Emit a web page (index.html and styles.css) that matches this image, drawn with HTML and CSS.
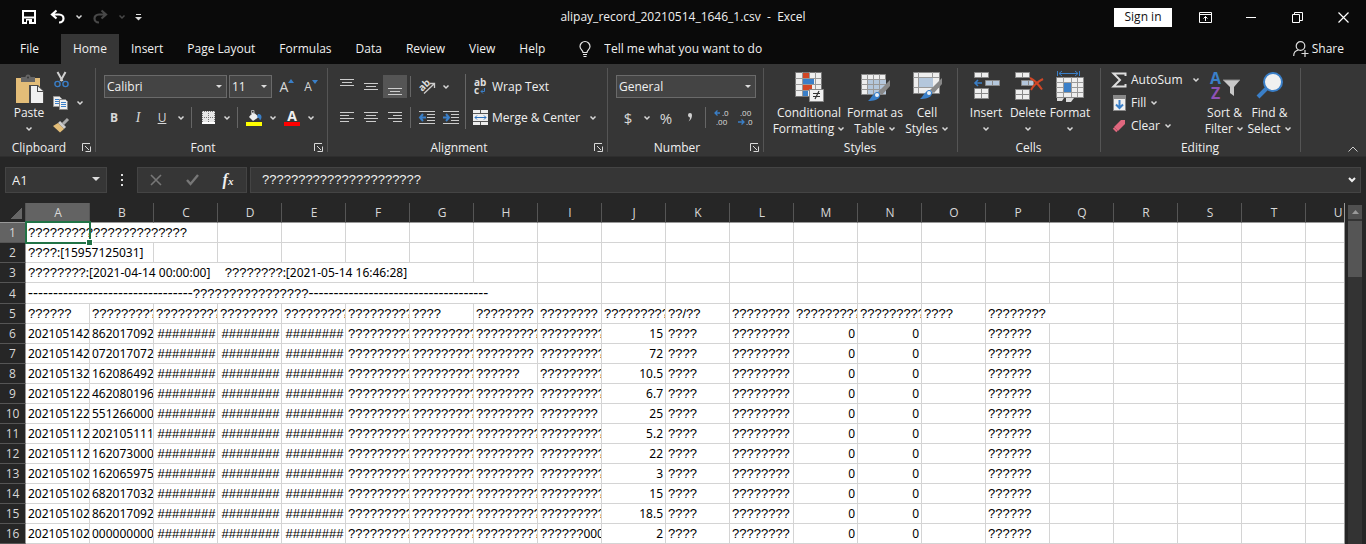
FILE: index.html
```html
<!DOCTYPE html>
<html lang="en">
<head>
    <meta charset="UTF-8">
    <meta name="viewport" content="width=device-width, initial-scale=1.0">
    <title>alipay_record_20210514_1646_1.csv - Excel</title>
    <link rel="stylesheet" href="styles.css">
</head>
<body>

    <!-- Shared icons -->
    <svg class="sprite" aria-hidden="true">
        <symbol id="chev" viewBox="0 0 8 8"><path d="M1.500 2.500L4 5l2.500-2.500" fill="none" stroke="#d8d8d8" stroke-width="1.500"/></symbol>
        <symbol id="launch" viewBox="0 0 9 9"><path d="M.5 8V.5H8M3 3l4 4M8.500 3.500v5H3.500" fill="none" stroke="#d8d8d8"/></symbol>
    </svg>

    <!-- Title bar -->
    <header class="titlebar">
        <div class="quick">
            <button class="qbtn" aria-label="Save"><svg width="14" height="14"><path d="M1 1h12v12H1z" fill="none" stroke="#fff" stroke-width="2"/><path d="M1 6.500h12v2H1zM4 9h6v5H4z" fill="#fff"/><path d="M5 10.500h2V14H5z" fill="#0a0a0a"/></svg></button>
            <button class="qbtn" aria-label="Undo"><svg width="15" height="14"><path d="M6.500.5L2 4.500l4.500 4M2.500 4.500H9c6 0 6 8 0 8" fill="none" stroke="#fff" stroke-width="2.200"/></svg></button>
            <button class="qdrop" aria-label="Undo list"><svg width="8" height="8"><use href="#chev"/></svg></button>
            <button class="qbtn" aria-label="Redo" disabled><svg width="15" height="14"><path d="M8.500.5l4.500 4-4.500 4M12.500 4.500H6c-6 0-6 8 0 8" fill="none" stroke="#484848" stroke-width="2.200"/></svg></button>
            <button class="qdrop dim" aria-label="Redo list" disabled><svg width="8" height="8"><use href="#chev"/></svg></button>
            <button class="qdrop" aria-label="Customize toolbar"><svg width="7" height="8"><path d="M1 1.500h5" stroke="#ddd"/><path d="M0 4h7L3.500 7.500z" fill="#ddd"/></svg></button>
        </div>
        <div class="doc-title">alipay_record_20210514_1646_1.csv&nbsp; -&nbsp; Excel</div>
        <div class="window">
            <button class="signin">Sign in</button>
            <button class="wbtn" aria-label="Ribbon display options"><svg width="13" height="11"><path d="M.5.5h12v10H.5zM.5 2.500h12M6.500 9V4.500M4.500 6.500l2-2 2 2" fill="none" stroke="#fff"/></svg></button>
            <button class="wbtn" aria-label="Minimize"><svg width="10" height="11"><path d="M0 5.500h10" stroke="#fff"/></svg></button>
            <button class="wbtn" aria-label="Restore"><svg width="11" height="11"><path d="M.5 2.500h7v8h-7zM2.500 2.500v-2h8v8h-3" fill="none" stroke="#fff"/></svg></button>
            <button class="wbtn" aria-label="Close"><svg width="11" height="11"><path d="M.5.5l10 10M10.500.5l-10 10" stroke="#fff" stroke-width="1.200"/></svg></button>
        </div>
    </header>

    <!-- Ribbon tabs -->
    <nav class="tabs">
        <a href="#" class="tab file">File</a>
        <a href="#" class="tab active">Home</a>
        <a href="#" class="tab">Insert</a>
        <a href="#" class="tab">Page Layout</a>
        <a href="#" class="tab">Formulas</a>
        <a href="#" class="tab">Data</a>
        <a href="#" class="tab">Review</a>
        <a href="#" class="tab">View</a>
        <a href="#" class="tab">Help</a>
        <label class="tell" for="tell">
            <svg width="12" height="17"><path d="M4 11.500C4 9 1 8.500 1 5.500a5 5 0 0 1 10 0C11 8.500 8 9 8 11.500zM4 13.500h4M4.500 15.500h3" fill="none" stroke="#e6e6e6" stroke-width="1.200"/></svg>
        </label>
        <input id="tell" class="tell-input" type="text" placeholder="Tell me what you want to do">
        <a href="#" class="share"><svg width="16" height="16"><circle cx="7.500" cy="5" r="4.300" fill="none" stroke="#ddd" stroke-width="1.200"/><path d="M.7 15c0-3 2-5.500 4.800-6M12 9v7M8.500 12.500h7" fill="none" stroke="#ddd" stroke-width="1.200"/></svg>Share</a>
    </nav>

    <!-- Ribbon -->
    <section class="ribbon">
        <div class="group clipboard">
            <div class="body">
                <button class="big">
                    <svg width="30" height="32"><path d="M2 7h24v25H2z" fill="#e3bd78"/><path d="M7 11V6h4.500a2.500 2.500 0 0 1 5 0H21v5z" fill="#666"/><circle cx="14" cy="6.500" r="1" fill="#363636"/><path d="M15 14h9l6 6v12H15z" fill="#4a4a4a"/><path d="M17 15h6v6h6v11H17z" fill="#f0f0f0"/><path d="M24 15.500l5 4.500h-5z" fill="#f0f0f0"/></svg>
                    <span>Paste</span>
                    <svg width="8" height="16" viewBox="0 -4 8 16"><use href="#chev" width="8" height="8"/></svg>
                </button>
                <div class="stack">
                    <button class="icon" aria-label="Cut"><svg width="15" height="16"><path d="M3.500 0l5 9M11.500 0l-5 9" stroke="#d0d0d0" stroke-width="2"/><circle cx="3.500" cy="12" r="2.600" fill="none" stroke="#3a7fc8" stroke-width="1.400"/><circle cx="11.500" cy="12" r="2.600" fill="none" stroke="#3a7fc8" stroke-width="1.400"/></svg></button>
                    <div class="row"><button class="icon" aria-label="Copy"><svg width="16" height="14"><path d="M.5.5h6l2 2v8h-8z" fill="#f0f0f0" stroke="#999"/><path d="M2 3.500h4M2 5.500h4M2 7.500h4" stroke="#3a7fc8"/><path d="M6.500 3.500h6l2 2v8h-8z" fill="#f0f0f0" stroke="#888"/><path d="M8 6.500h5M8 8.500h5M8 10.500h5" stroke="#3a7fc8"/></svg></button><button class="drop" aria-label="Copy options"><svg width="8" height="8"><use href="#chev"/></svg></button></div>
                    <button class="icon" aria-label="Format Painter"><svg width="16" height="15"><path d="M15 1L10 6" stroke="#aaa" stroke-width="3"/><path d="M6 4l6 6" stroke="#ccc" stroke-width="3"/><path d="M5 5l6 6-4 3.500L0 8z" fill="#e3bd78"/></svg></button>
                </div>
            </div>
            <div class="caption"><span>Clipboard</span><button class="launcher" aria-label="Clipboard settings"><svg width="9" height="9"><use href="#launch"/></svg></button></div>
        </div>

        <div class="group font">
            <div class="body lines">
                <div class="row">
                    <div class="combo family"><select aria-label="Font"><option>Calibri</option></select></div>
                    <div class="combo size"><select aria-label="Font size"><option>11</option></select></div>
                    <button class="icon grow" aria-label="Increase font size">A<svg width="6" height="16"><path d="M0 4h6L3 0z" fill="#3a7fc8"/></svg></button>
                    <button class="icon shrink" aria-label="Decrease font size">A<svg width="6" height="16"><path d="M0 1h6L3 5z" fill="#3a7fc8"/></svg></button>
                </div>
                <div class="row">
                    <button class="icon letter"><b>B</b></button>
                    <button class="icon letter italic"><i>I</i></button>
                    <button class="icon letter"><u>U</u></button>
                    <button class="drop" aria-label="Underline options"><svg width="8" height="8"><use href="#chev"/></svg></button>
                    <span class="vline"></span>
                    <button class="icon" aria-label="Borders"><svg width="13" height="13"><path d="M0 0h13v13H0z" fill="#e8e8e8"/><path d="M0 .5h13M0 6.500h13M.5 0v11M6.500 0v11M12.500 0v11" stroke="#777" stroke-dasharray="1 1"/><path d="M0 12h13" stroke="#fff" stroke-width="2"/></svg></button>
                    <button class="drop" aria-label="Border options"><svg width="8" height="8"><use href="#chev"/></svg></button>
                    <span class="vline"></span>
                    <button class="icon" aria-label="Fill color"><svg width="16" height="16"><path d="M0 12h16v4H0z" fill="#ff0"/><path d="M7 2l6 5-6 4-4-4z" fill="#eee"/><path d="M5.500 5V.5H8V4" fill="none" stroke="#aaa"/><path d="M12 4c4-.5 4.500 4 2 6.500-.5-2-1-3-3-3z" fill="#3a7fc8"/></svg></button>
                    <button class="drop" aria-label="Fill options"><svg width="8" height="8"><use href="#chev"/></svg></button>
                    <button class="icon fontcolor" aria-label="Font color">A</button>
                    <button class="drop" aria-label="Font color options"><svg width="8" height="8"><use href="#chev"/></svg></button>
                </div>
            </div>
            <div class="caption"><span>Font</span><button class="launcher" aria-label="Font settings"><svg width="9" height="9"><use href="#launch"/></svg></button></div>
        </div>

        <div class="group align">
            <div class="body">
                <div class="lines">
                    <div class="row">
                        <button class="icon" aria-label="Top align"><svg width="14" height="18"><path d="M0 1.500h14M2 4.500h10M0 7.500h14" stroke="#ccc"/></svg></button>
                        <button class="icon" aria-label="Middle align"><svg width="14" height="18"><path d="M0 5.500h14M2 8.500h10M0 11.500h14" stroke="#ccc"/></svg></button>
                        <button class="icon on" aria-label="Bottom align"><svg width="14" height="18"><path d="M0 10.500h14M2 13.500h10M0 16.500h14" stroke="#ccc"/></svg></button>
                        <span class="vline"></span>
                        <button class="icon" aria-label="Orientation"><svg width="18" height="18"><text x="1" y="12" transform="rotate(-45 5 9)" class="tiny">ab</text><path d="M6 15.500L16 6M12 5.500h4.500V10" fill="none" stroke="#ccc" stroke-width="1.300"/></svg></button>
                        <button class="drop" aria-label="Orientation options"><svg width="8" height="8"><use href="#chev"/></svg></button>
                    </div>
                    <div class="row">
                        <button class="icon" aria-label="Align left"><svg width="14" height="12"><path d="M0 .5h14M0 3.500h9M0 6.500h14M0 9.500h9" stroke="#ccc"/></svg></button>
                        <button class="icon" aria-label="Center"><svg width="14" height="12"><path d="M0 .5h14M2 3.500h10M0 6.500h14M2 9.500h10" stroke="#ccc"/></svg></button>
                        <button class="icon" aria-label="Align right"><svg width="14" height="12"><path d="M0 .5h14M5 3.500h9M0 6.500h14M5 9.500h9" stroke="#ccc"/></svg></button>
                        <span class="vline"></span>
                        <button class="icon" aria-label="Decrease indent"><svg width="16" height="13"><path d="M0 .5h16M8 3.500h8M8 6.500h8M8 9.500h8M0 12.500h16" stroke="#ccc"/><path d="M4 3L1 6.500 4 10M1 6.500h6" fill="none" stroke="#3a7fc8" stroke-width="2"/></svg></button>
                        <button class="icon" aria-label="Increase indent"><svg width="16" height="13"><path d="M0 .5h16M8 3.500h8M8 6.500h8M8 9.500h8M0 12.500h16" stroke="#ccc"/><path d="M3 3l3 3.500L3 10M0 6.500h6" fill="none" stroke="#3a7fc8" stroke-width="2"/></svg></button>
                    </div>
                </div>
                <span class="vline tall"></span>
                <div class="lines">
                    <button class="text-btn"><svg width="15" height="18"><text x="1" y="8" class="tiny">ab</text><text x="1" y="16" class="tiny">c</text><path d="M11.500 10v3.500H8M10 11.500l-2 2 2 2" fill="none" stroke="#3a7fc8"/></svg>Wrap Text</button>
                    <button class="text-btn merge"><svg width="15" height="15"><path d="M0 0h15v15H0z" fill="#eee"/><path d="M0 3.500h15M0 11.500h15M7.500 0v3M7.500 12v3" stroke="#555"/><path d="M2 7.500h11M4 5.500l-2 2 2 2M11 5.500l2 2-2 2" fill="none" stroke="#2a70bd"/></svg>Merge &amp; Center<svg width="8" height="8"><use href="#chev"/></svg></button>
                </div>
            </div>
            <div class="caption"><span>Alignment</span><button class="launcher" aria-label="Alignment settings"><svg width="9" height="9"><use href="#launch"/></svg></button></div>
        </div>

        <div class="group number">
            <div class="body lines">
                <div class="row"><div class="combo format"><select aria-label="Number format"><option>General</option></select></div></div>
                <div class="row">
                    <button class="icon sign">$</button>
                    <button class="drop" aria-label="Currency options"><svg width="8" height="8"><use href="#chev"/></svg></button>
                    <button class="icon sign">%</button>
                    <button class="icon sign" aria-label="Comma style"><svg width="6" height="9"><path d="M1 2a2 2 0 1 1 4 0c0 3-1 5-3.500 6.500C2.500 7 3 6 3 4.500 2 4.500 1 3.500 1 2z" fill="#d0d0d0"/></svg></button>
                    <span class="vline"></span>
                    <button class="icon" aria-label="Increase decimal"><svg width="16" height="16"><text x="8" y="6" class="dec">.0</text><text x="2" y="15" class="dec">.00</text><path d="M3.500.5L1 3l2.500 2.500M1 3h5" fill="none" stroke="#3a7fc8" stroke-width="1.300"/></svg></button>
                    <button class="icon" aria-label="Decrease decimal"><svg width="16" height="16"><text x="2" y="6" class="dec">.00</text><text x="8" y="15" class="dec">.0</text><path d="M3.500 9.500L6 12l-2.500 2.500M6 12H0" fill="none" stroke="#3a7fc8" stroke-width="1.300"/></svg></button>
                </div>
            </div>
            <div class="caption"><span>Number</span><button class="launcher" aria-label="Number settings"><svg width="9" height="9"><use href="#launch"/></svg></button></div>
        </div>

        <div class="group styles">
            <div class="body">
                <button class="big cond">
                    <svg width="30" height="32"><path d="M1.500 1.500h26v24h-26z" fill="#eee" stroke="#777"/><path d="M9 2h6v5H9zM9 14h9v5H9z" fill="#d24726"/><path d="M9 8h11v5H9zM9 20h5v5H9z" fill="#3a7fc8"/><path d="M1.500 7.500h26M1.500 13.500h26M1.500 19.500h26M8.500 1v24M21.500 1v24M15.500 1v6" stroke="#999" fill="none"/><path d="M15.500 18.500h14v12h-14z" fill="#f0f0f0" stroke="#888"/><path d="M19 22.500h7M19 25.500h7M25 20l-4 8" stroke="#333" stroke-width="1.200"/></svg>
                    <span>Conditional</span><span>Formatting <svg width="8" height="8"><use href="#chev"/></svg></span>
                </button>
                <button class="big fmt">
                    <svg width="30" height="32"><path d="M1.500 3.500h24v20h-24z" fill="#eee" stroke="#888"/><path d="M8 9h18v14H8z" fill="#b4c7dc"/><path d="M1 8.500h25M1 13.500h25M1 18.500h25M7.500 3v20M13.500 3v20M19.500 3v20" stroke="#999"/><path d="M30 9v6l-8 9-4-3z" fill="#888"/><path d="M14 23c3-4 7-1 6 2-1 4-7 5-12 5 3-2 3-5 6-7z" fill="#3a7fc8"/><circle cx="17" cy="24" r="2" fill="#e8f0f8"/></svg>
                    <span>Format as</span><span>Table <svg width="8" height="8"><use href="#chev"/></svg></span>
                </button>
                <button class="big cell">
                    <svg width="30" height="32"><path d="M1.500 1.500h26v21h-26z" fill="#eee" stroke="#888"/><path d="M1 6.500h26M1 16.500h26M6.500 1v21M20.500 1v21" stroke="#999"/><path d="M7 7h14v9H7z" fill="#b4c7dc"/><path d="M30 7v6l-8 9-4-3z" fill="#888"/><path d="M14 21c3-4 7-1 6 2-1 4-7 5-12 5 3-2 3-5 6-7z" fill="#3a7fc8"/><circle cx="17" cy="22" r="2" fill="#e8f0f8"/></svg>
                    <span>Cell</span><span>Styles <svg width="8" height="8"><use href="#chev"/></svg></span>
                </button>
            </div>
            <div class="caption"><span>Styles</span></div>
        </div>

        <div class="group cells">
            <div class="body">
                <button class="big">
                    <svg width="30" height="32"><path d="M3.500 1.500h14v5h-14zM3.500 17.500h14v10h-14zM3.500 22.500h14M10.500 1v5M10.500 17v10" fill="#eee" stroke="#888"/><path d="M14.500 9.500h14v5h-14zM21.500 9v6" fill="#b4c7dc" stroke="#888"/><path d="M7 9l-3 3 3 3M4 12h7" fill="none" stroke="#3a7fc8" stroke-width="1.600"/></svg>
                    <span>Insert</span><svg width="8" height="16" viewBox="0 -4 8 16"><use href="#chev" width="8" height="8"/></svg>
                </button>
                <button class="big">
                    <svg width="30" height="32"><path d="M2.500 1.500h14v5h-14zM2.500 18.500h14v10h-14zM2.500 23.500h14M9.500 1v5M9.500 18v10" fill="#eee" stroke="#888"/><path d="M8.500 9.500h12v5h-12zM15.500 9v6" fill="#b4c7dc" stroke="#888"/><path d="M17 7c4 2 9 7 12 11.500M30 8c-6 3-10 7-12 11" fill="none" stroke="#d24726" stroke-width="2"/></svg>
                    <span>Delete</span><svg width="8" height="16" viewBox="0 -4 8 16"><use href="#chev" width="8" height="8"/></svg>
                </button>
                <button class="big">
                    <svg width="30" height="32"><path d="M2.500 0v5M24.500 0v5M4 2.500h19M7 0L4 2.500 7 5M20 0l3 2.500L20 5" fill="none" stroke="#3a7fc8"/><path d="M1.500 6.500h27v20h-27z" fill="#eee" stroke="#888"/><path d="M1 11.500h27M1 21.500h27M8.500 6v20M16.500 6v20M22.500 6v20M1 16.500h27" stroke="#999"/><path d="M9 12h7v9H9z" fill="#3a7fc8"/><path d="M2 27h7l-2 3H2zM11 27h8l-3 4h-5z" fill="#ddd"/></svg>
                    <span>Format</span><svg width="8" height="16" viewBox="0 -4 8 16"><use href="#chev" width="8" height="8"/></svg>
                </button>
            </div>
            <div class="caption"><span>Cells</span></div>
        </div>

        <div class="group editing">
            <div class="body">
                <div class="stack">
                    <button class="text-btn sum"><svg width="15" height="16"><path d="M13.500 4V1.500H1.500L8 8l-6.500 6.500h12V12" fill="none" stroke="#ddd" stroke-width="2"/></svg>AutoSum<svg width="8" height="8"><use href="#chev"/></svg></button>
                    <button class="text-btn"><svg width="15" height="16"><path d="M1 0h13v16H1z" fill="#888"/><path d="M2 4h11v11H2z" fill="#f0f0f0"/><path d="M7.500 5v8M4 9.500L7.500 13 11 9.500" fill="none" stroke="#3a7fc8" stroke-width="2"/></svg>Fill<svg width="8" height="8"><use href="#chev"/></svg></button>
                    <button class="text-btn"><svg width="15" height="14"><path d="M9 1h4v4L6 12 2 8z" fill="#e0677e"/><path d="M1.500 9L5 12.500" stroke="#e0677e" stroke-width="2"/></svg>Clear<svg width="8" height="8"><use href="#chev"/></svg></button>
                </div>
                <button class="big sort">
                    <svg width="30" height="32"><text x="0" y="13" class="az a">A</text><text x="1" y="28" class="az z">Z</text><path d="M13 9h17l-6 7v9l-4-3v-6z" fill="#c8c8c8"/><path d="M13 9h17" stroke="#888"/></svg>
                    <span>Sort &amp;</span><span>Filter <svg width="8" height="8"><use href="#chev"/></svg></span>
                </button>
                <button class="big">
                    <svg width="30" height="32"><path d="M12 17L3 26" stroke="#3a7fc8" stroke-width="4"/><circle cx="18" cy="11" r="9" fill="#f0f0f0" stroke="#3a7fc8" stroke-width="2"/></svg>
                    <span>Find &amp;</span><span>Select <svg width="8" height="8"><use href="#chev"/></svg></span>
                </button>
            </div>
            <div class="caption"><span>Editing</span></div>
        </div>
        <button class="collapse" aria-label="Collapse the ribbon"><svg width="10" height="6"><path d="M.5 5.500L5 1l4.500 4.500" fill="none" stroke="#ccc"/></svg></button>
    </section>

    <!-- Formula bar -->
    <section class="formula">
        <div class="combo name"><input type="text" value="A1" aria-label="Name box"></div>
        <svg class="dots" width="3" height="12"><path d="M0 0h2v2H0zM0 5h2v2H0zM0 10h2v2H0z" fill="#ddd"/></svg>
        <div class="fx">
            <button aria-label="Cancel"><svg width="12" height="12"><path d="M1 1l10 10M11 1L1 11" stroke="#777" stroke-width="1.600"/></svg></button>
            <button aria-label="Enter"><svg width="13" height="12"><path d="M1 6l3.500 4L12 1" fill="none" stroke="#777" stroke-width="2.400"/></svg></button>
            <button aria-label="Insert function"><i>f<small>x</small></i></button>
        </div>
        <div class="entry">
            <input type="text" value="??????????????????????" aria-label="Formula">
            <button aria-label="Expand formula bar"><svg width="8" height="8"><path d="M1 2l3 3 3-3" fill="none" stroke="#eee" stroke-width="2"/></svg></button>
        </div>
    </section>

    <!-- Sheet -->
    <main class="sheet">
        <div class="grid">
            <table>
                <thead><tr id="letters"></tr></thead>
                <tbody id="rows"></tbody>
            </table>
        </div>
        <div class="scroll">
            <button aria-label="Scroll up"><svg width="7" height="4"><path d="M0 4h7L3.500 0z" fill="#999"/></svg></button>
            <div class="track"><div class="thumb"></div></div>
        </div>
    </main>

    <script>
        const q = n => '?'.repeat(n);
        const hash = '#'.repeat(8);
        const lastColumn = 21;

        // Rows that differ only in these columns: A, B, H, I, J
        const records = [
            ['202105142', '862017092', q(9), q(9), '15'],
            ['202105142', '072017072', q(8), q(9), '72'],
            ['202105132', '162086492', q(6), q(9), '10.5'],
            ['202105122', '462080196', q(8), q(9), '6.7'],
            ['202105122', '551266000', q(8), q(8), '25'],
            ['202105112', '202105111', q(9), q(9), '5.2'],
            ['202105112', '162073000', q(8), q(9), '22'],
            ['202105102', '162065975', q(8), q(9), '3'],
            ['202105102', '682017032', q(9), q(9), '15'],
            ['202105102', '862017092', q(9), q(9), '18.5'],
            ['202105102', '000000000', q(9), q(6) + '<span class="digits">000</span>', '2']
        ];

        // A cell is [text, class, colspan]
        const rows = [
            [[q(22) + '<span class="selection"></span>', 'selected', 3]],
            [[q(4) + '<span class="digits">:[15957125031]</span>', '', 2]],
            [[q(8) + '<span class="digits">:[2021-04-14 00:00:00]</span>&nbsp;&nbsp;&nbsp; ' + q(8) + '<span class="digits">:[2021-05-14 16:46:28]</span>', '', 7]],
            [['<span class="dashes">' + '-'.repeat(33) + '</span>' + q(16) + '<span class="dashes">' + '-'.repeat(36) + '</span>', '', 8]],
            [q(6), q(9), q(9), q(8), q(9), q(9), q(4), q(8), q(8), q(9), '??/??', q(8), q(9), q(9), q(4)].map(t => [t]).concat([[q(8), '', 2]])
        ];
        records.forEach(r => rows.push([
            [r[0], 'digits'], [r[1], 'digits'], [hash, 'hash'], [hash, 'hash'], [hash, 'hash'],
            [q(9)], [q(9)], [r[2]], [r[3]], [r[4], 'digits num'],
            [q(4)], [q(8)], ['0', 'digits num'], ['0', 'digits num'], [''], [q(6)]
        ]));
        rows.push([]);

        // Column letters
        let letters = '<th class="corner"></th>';
        for (let i = 0; i < lastColumn; i++) {
            letters += `<th class="${i === 0 ? 'current' : ''}">${String.fromCharCode(65 + i)}</th>`;
        }
        document.getElementById('letters').innerHTML = letters;

        // Sheet rows, padded with empty cells up to the last column
        document.getElementById('rows').innerHTML = rows.map((cells, index) => {
            let used = 0;
            let html = `<th class="${index === 0 ? 'current' : ''}">${index + 1}</th>`;
            cells.forEach(([text, cls = '', span = 1]) => {
                html += `<td class="${cls}" colspan="${span}">${text}</td>`;
                used += span;
            });
            return '<tr>' + html + '<td></td>'.repeat(lastColumn - used) + '</tr>';
        }).join('');
    </script>

</body>
</html>
```

FILE: styles.css
```css
* {
    box-sizing: border-box;
}
body {
    margin: 0;
    height: 100vh;
    display: flex;
    flex-direction: column;
    overflow: hidden;
    background-color: #262626;
    color: #f0f0f0;
    font-family: "Open Sans", "Noto Sans", sans-serif;
    font-size: 12px;
    line-height: 16px;
}
button, input, select {
    font: inherit;
    color: inherit;
    background: none;
    border: 0;
    padding: 0;
    margin: 0;
    outline: 0;
}
button {
    display: flex;
    align-items: center;
    justify-content: center;
    white-space: nowrap;
}
a {
    color: inherit;
    text-decoration: none;
}
svg {
    flex: none;
    overflow: visible;
}
.sprite {
    position: absolute;
    width: 0;
    height: 0;
}

/* Title bar */
.titlebar {
    display: grid;
    grid-template-columns: 1fr auto 1fr;
    align-items: center;
    height: 34px;
    background-color: #0a0a0a;
}
.quick {
    display: flex;
    padding-left: 18px;
}
.qbtn {
    width: 22px;
    margin-right: 6px;
}
.qdrop {
    width: 9px;
    margin-right: 6px;
}
.dim {
    opacity: 0.3;
    margin-right: 8px;
}
.window {
    display: flex;
    justify-content: flex-end;
}
.signin {
    width: 58px;
    height: 19px;
    margin-right: 10px;
    background-color: #fff;
    color: #111;
}
.wbtn {
    width: 46px;
}

/* Tabs */
.tabs {
    display: flex;
    align-items: center;
    height: 30px;
    padding-left: 8px;
    background-color: #0a0a0a;
}
.tab {
    padding: 0 12px;
    line-height: 30px;
}
.file {
    margin-right: 10px;
}
.active {
    background-color: #363636;
}
.tell {
    display: flex;
    padding: 0 13px 0 22px;
}
.tell-input {
    flex: 1;
}
.tell-input::placeholder {
    color: #f0f0f0;
    opacity: 1;
}
.share {
    display: flex;
    gap: 3px;
    padding-right: 22px;
}

/* Ribbon */
.ribbon {
    display: flex;
    padding: 4px 0 1px;
    background-color: #363636;
    border-bottom: 1px solid #2e2e2e;
}
.group {
    background: linear-gradient(#555, #555) right top / 1px 84px no-repeat;
}
.body {
    display: flex;
    height: 72px;
}
.caption {
    display: flex;
    align-items: center;
    padding-right: 2px;
    line-height: 15px;
}
.caption span {
    flex: 1;
    text-align: center;
}
.launcher {
    width: 16px;
}
.row {
    display: flex;
    align-items: center;
}
.lines, .body.lines {
    display: flex;
    flex-direction: column;
    gap: 8px;
    padding-top: 7px;
}
.lines .row, .lines .text-btn {
    height: 23px;
}
.icon {
    width: 24px;
    height: 23px;
}
.drop {
    width: 14px;
    height: 23px;
}
.on {
    background-color: #555;
}
.vline {
    width: 1px;
    height: 21px;
    margin: 0 4px 0 3px;
    background-color: #666;
}
.tall {
    height: 55px;
    margin: 6px 7px 0 2px;
}
.big {
    flex-direction: column;
    justify-content: flex-start;
    padding-top: 3px;
}
.big > svg:first-child {
    margin-bottom: 2px;
}
.stack {
    display: flex;
    flex-direction: column;
}
.text-btn {
    justify-content: flex-start;
    gap: 4px;
    height: 23px;
}
.combo {
    position: relative;
    height: 23px;
    background-color: #444;
    border: 1px solid #6a6a6a;
}
.combo select, .combo input {
    width: 100%;
    height: 100%;
    padding-left: 2px;
    appearance: none;
}
.combo::after {
    content: "";
    position: absolute;
    right: 4px;
    top: 9px;
    border: 3px solid transparent;
    border-top-color: #ddd;
    border-bottom: 0;
    pointer-events: none;
}

.clipboard {
    width: 96px;
}
.clipboard .body {
    padding-left: 11px;
}
.clipboard .big {
    width: 36px;
    margin-right: 2px;
}
.font {
    width: 232px;
}
.font .body {
    padding-left: 6px;
}
.family {
    width: 123px;
    margin: 0 2px;
}
.size {
    width: 43px;
    margin-right: 3px;
}
.grow, .shrink, .letter {
    color: #d8d8d8;
}
.grow {
    font-size: 14px;
}
.italic {
    font-family: "Liberation Serif", serif;
    font-size: 14px;
}
.fontcolor {
    width: 16px;
    height: 16px;
    margin: 0 4px;
    font-size: 14px;
    font-weight: bold;
    line-height: 12px;
    border-bottom: 4px solid #f00;
}
.align {
    width: 280px;
}
.align .body {
    padding-left: 7px;
}
.merge svg:last-child {
    margin-left: 5px;
}
.number {
    width: 156px;
}
.number .body {
    padding-left: 8px;
}
.format {
    width: 140px;
}
.sign {
    font-size: 15px;
    color: #d8d8d8;
}
.styles {
    width: 194px;
}
.styles .body {
    padding-left: 9px;
}
.cond {
    width: 72px;
}
.fmt {
    width: 60px;
}
.cell {
    width: 44px;
}
.cells {
    width: 143px;
}
.cells .body {
    padding-left: 7px;
}
.cells .big {
    width: 42px;
}
.editing {
    width: 200px;
}
.editing .body {
    padding-left: 11px;
}
.editing .stack {
    width: 90px;
}
.editing .big {
    width: 45px;
}
.sum svg:last-child {
    margin-left: 5px;
}
.collapse {
    margin: auto 8px 3px auto;
}
.tiny {
    fill: #ddd;
    font-size: 10px;
    font-weight: bold;
}
.dec {
    fill: #ddd;
    font-size: 8px;
}
.az {
    font-size: 16px;
    font-weight: bold;
}
.a {
    fill: #3a7fc8;
}
.z {
    fill: #8e52b5;
}

/* Formula bar */
.formula {
    display: flex;
    align-items: center;
    padding: 10px 5px;
}
.name, .fx, .entry {
    height: 26px;
    background-color: #363636;
    border: 1px solid #444;
}
.name {
    width: 102px;
}
.name input {
    padding-left: 6px;
    font-size: 13px;
}
.name::after {
    right: 6px;
    border-width: 4px 4px 0;
}
.dots {
    margin: 0 13px 0 14px;
}
.fx {
    display: flex;
    width: 110px;
    margin-right: 3px;
}
.fx button {
    flex: 1;
}
.fx i {
    font-family: "Liberation Serif", serif;
    font-size: 16px;
    font-weight: bold;
}
.fx small {
    font-size: 11px;
}
.entry {
    display: flex;
    flex: 1;
}
.entry input {
    flex: 1;
    padding-left: 11px;
    font-family: "Liberation Sans", Arial, sans-serif;
    font-size: 13px;
}
.entry button {
    width: 16px;
}

/* Sheet */
.sheet {
    display: flex;
    flex: 1;
    min-height: 0;
}
.grid {
    flex: 1;
    overflow: hidden;
    border-right: 1px solid #999;
}
table {
    width: 1370px;
    table-layout: fixed;
    border-collapse: separate;
    border-spacing: 0;
    font-family: "Liberation Sans", Arial, sans-serif;
    font-size: 13px;
    line-height: 19px;
}
th {
    height: 20px;
    padding: 0;
    font-family: "Open Sans", "Noto Sans", sans-serif;
    font-size: 12px;
    font-weight: normal;
    color: #d8d8d8;
    background-color: #262626;
}
thead th {
    width: 64px;
    padding-left: 1px;
    border-bottom: 1px solid #999;
    border-right: 1px solid #555;
}
tbody th {
    border-bottom: 1px solid #555;
    border-right: 1px solid #999;
}
thead .corner {
    width: 26px;
    background: linear-gradient(135deg, transparent 50%, #666 50%) 10px 4px / 12px 12px no-repeat;
}
.current {
    background-color: #636363;
}
td {
    height: 20px;
    padding: 0 0 0 2px;
    overflow: hidden;
    white-space: nowrap;
    background-color: #fff;
    color: #000;
    border-right: 1px solid #d4d4d4;
    border-bottom: 1px solid #d4d4d4;
}
.digits {
    font-family: "Noto Sans", "Open Sans", sans-serif;
    font-size: 12px;
}
.num {
    padding-right: 2px;
    text-align: right;
}
.hash {
    text-align: center;
}
.dashes {
    font-size: 15px;
}
.selected {
    position: relative;
    overflow: visible;
}
.selection {
    position: absolute;
    left: -1px;
    top: -2px;
    width: 66px;
    height: 23px;
    border: 2px solid #217346;
}
.selection::after {
    content: "";
    position: absolute;
    right: -3px;
    bottom: -3px;
    width: 5px;
    height: 5px;
    background-color: #217346;
    outline: 1px solid #fff;
}
.scroll {
    display: flex;
    flex-direction: column;
    width: 21px;
    padding: 2px 4px 0 3px;
}
.scroll button {
    height: 14px;
    background-color: #505050;
}
.track {
    flex: 1;
    padding-top: 2px;
    background-color: #333;
}
.thumb {
    height: 56px;
    background-color: #555;
}
```
